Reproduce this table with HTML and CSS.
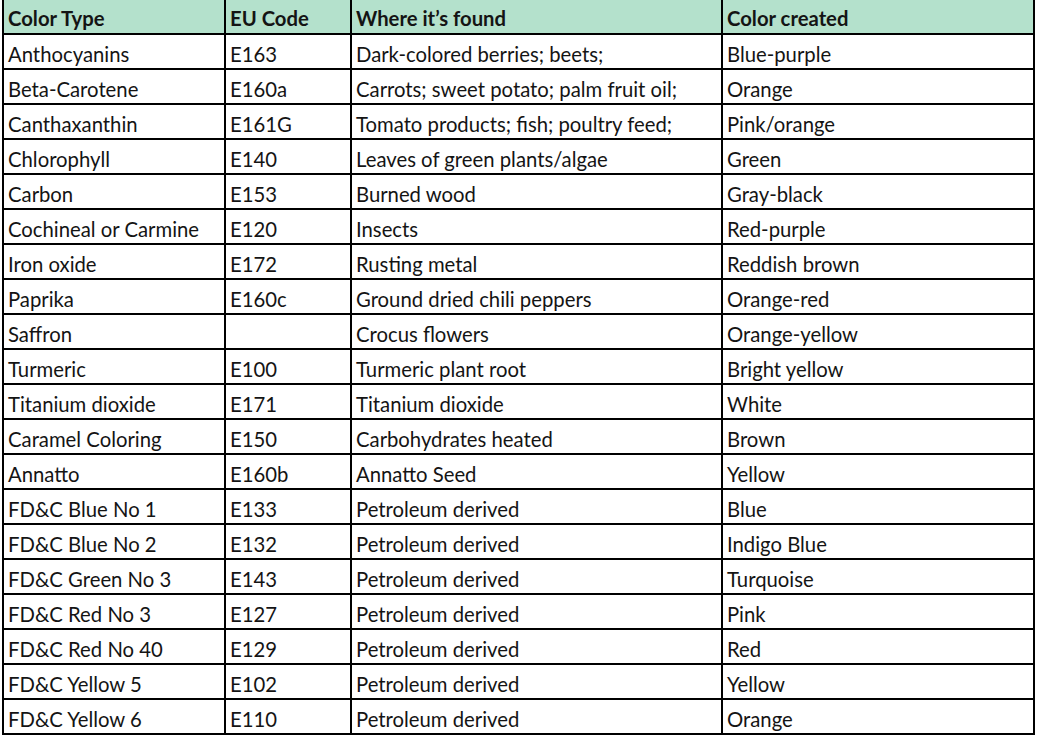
FILE: index.html
```html
<!DOCTYPE html>
<html>
<head>
<meta charset="utf-8">
<link rel="stylesheet" href="styles.css">
</head>
<body>
<table class="dyes">
<colgroup>
<col class="c1"><col class="c2"><col class="c3"><col class="c4">
</colgroup>
<thead>
<tr><th>Color Type</th><th>EU Code</th><th>Where it’s found</th><th>Color created</th></tr>
</thead>
<tbody>
<tr><td>Anthocyanins</td><td>E163</td><td>Dark-colored berries; beets;</td><td>Blue-purple</td></tr>
<tr><td>Beta-Carotene</td><td>E160a</td><td>Carrots; sweet potato; palm fruit oil;</td><td>Orange</td></tr>
<tr><td>Canthaxanthin</td><td>E161G</td><td>Tomato products; fish; poultry feed;</td><td>Pink/orange</td></tr>
<tr><td>Chlorophyll</td><td>E140</td><td>Leaves of green plants/algae</td><td>Green</td></tr>
<tr><td>Carbon</td><td>E153</td><td>Burned wood</td><td>Gray-black</td></tr>
<tr><td>Cochineal or Carmine</td><td>E120</td><td>Insects</td><td>Red-purple</td></tr>
<tr><td>Iron oxide</td><td>E172</td><td>Rusting metal</td><td>Reddish brown</td></tr>
<tr><td>Paprika</td><td>E160c</td><td>Ground dried chili peppers</td><td>Orange-red</td></tr>
<tr><td>Saffron</td><td></td><td>Crocus flowers</td><td>Orange-yellow</td></tr>
<tr><td>Turmeric</td><td>E100</td><td>Turmeric plant root</td><td>Bright yellow</td></tr>
<tr><td>Titanium dioxide</td><td>E171</td><td>Titanium dioxide</td><td>White</td></tr>
<tr><td>Caramel Coloring</td><td>E150</td><td>Carbohydrates heated</td><td>Brown</td></tr>
<tr><td>Annatto</td><td>E160b</td><td>Annatto Seed</td><td>Yellow</td></tr>
<tr><td>FD&amp;C Blue No 1</td><td>E133</td><td>Petroleum derived</td><td>Blue</td></tr>
<tr><td>FD&amp;C Blue No 2</td><td>E132</td><td>Petroleum derived</td><td>Indigo Blue</td></tr>
<tr><td>FD&amp;C Green No 3</td><td>E143</td><td>Petroleum derived</td><td>Turquoise</td></tr>
<tr><td>FD&amp;C Red No 3</td><td>E127</td><td>Petroleum derived</td><td>Pink</td></tr>
<tr><td>FD&amp;C Red No 40</td><td>E129</td><td>Petroleum derived</td><td>Red</td></tr>
<tr><td>FD&amp;C Yellow 5</td><td>E102</td><td>Petroleum derived</td><td>Yellow</td></tr>
<tr><td>FD&amp;C Yellow 6</td><td>E110</td><td>Petroleum derived</td><td>Orange</td></tr>
</tbody>
</table>
</body>
</html>
```
FILE: styles.css
```css
html, body {
  margin: 0;
  padding: 0;
  background: #ffffff;
}
.dyes {
  margin-left: 2px;
  border-collapse: collapse;
  table-layout: fixed;
  width: 1031px;
  font-family: Lato, "Liberation Sans", sans-serif;
  font-size: 20.3px;
  line-height: 22px;
  color: #141414;
}
.c1 { width: 222px; }
.c2 { width: 126px; }
.c3 { width: 371px; }
.c4 { width: 312px; }
.dyes th,
.dyes td {
  border: 2px solid #000;
  text-align: left;
  white-space: nowrap;
  overflow: hidden;
  vertical-align: top;
}
.dyes th {
  background: #b4e1cc;
  border-top: none;
  font-weight: bold;
  padding: 7px 5px 4px 4px;
}
.dyes td {
  padding: 8px 5px 3px 4px;
}
```
